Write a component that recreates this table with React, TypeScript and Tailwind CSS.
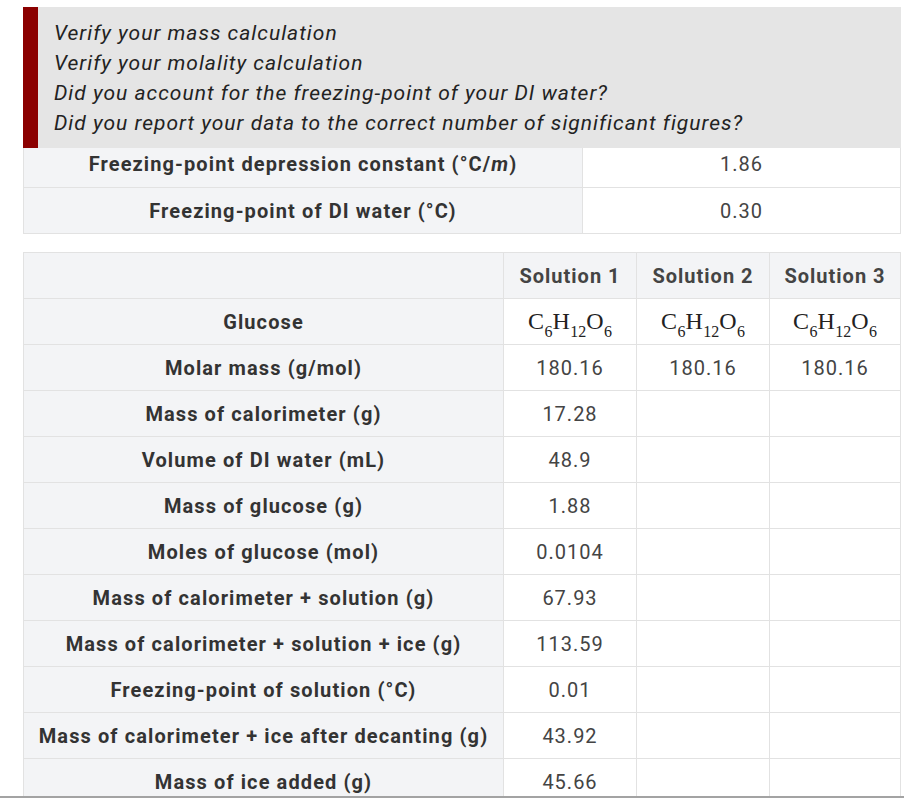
const rows: [string, string][] = [
  ["Molar mass (g/mol)", "180.16"],
  ["Mass of calorimeter (g)", "17.28"],
  ["Volume of DI water (mL)", "48.9"],
  ["Mass of glucose (g)", "1.88"],
  ["Moles of glucose (mol)", "0.0104"],
  ["Mass of calorimeter + solution (g)", "67.93"],
  ["Mass of calorimeter + solution + ice (g)", "113.59"],
  ["Freezing-point of solution (°C)", "0.01"],
  ["Mass of calorimeter + ice after decanting (g)", "43.92"],
  ["Mass of ice added (g)", "45.66"],
];

function Glucose() {
  return (
    <span className="font-['Liberation_Serif',serif] text-[24px] text-[#222] tracking-[0.5px]">
      C<sub className="text-[16px] align-[-4px] tracking-normal">6</sub>H
      <sub className="text-[16px] align-[-4px] tracking-normal">12</sub>O
      <sub className="text-[16px] align-[-4px] tracking-normal">6</sub>
    </span>
  );
}

export default function App() {
  const label =
    "bg-[#f3f4f6] text-center font-bold text-[#333] tracking-[1.1px] border-b border-[#e2e2e2]";
  const cell = "border-l border-b border-[#e2e2e2] text-center text-[#444] tracking-[1px]";

  return (
    <div className="h-[800px] bg-white font-['Roboto',sans-serif] text-[20px]">
      <div className="h-[798px] overflow-hidden border-b-2 border-[#a3a3a3] pt-[7px] px-[23px] pr-[3px]">
        {/* Hints */}
        <div className="flex bg-[#e5e5e5] h-[141px]">
          <div className="w-[15px] bg-[#8b0000]" />
          <div className="pl-[16px] pt-[11px] italic text-[21px] text-[#222] leading-[30px] tracking-[1px]">
            <p>Verify your mass calculation</p>
            <p>Verify your molality calculation</p>
            <p>Did you account for the freezing-point of your DI water?</p>
            <p>Did you report your data to the correct number of significant figures?</p>
          </div>
        </div>

        {/* Constants */}
        <div className="grid grid-cols-[558px_1fr] border-x border-[#e2e2e2]">
          <div className={`${label} h-[40px] leading-[32px]`}>
            Freezing-point depression constant (°C/<i>m</i>)
          </div>
          <div className={`${cell} h-[40px] leading-[32px]`}>1.86</div>
          <div className={`${label} h-[46px] leading-[46px]`}>Freezing-point of DI water (°C)</div>
          <div className={`${cell} h-[46px] leading-[46px]`}>0.30</div>
        </div>

        {/* Solutions */}
        <div className="mt-[18px] grid grid-cols-[479px_133px_133px_1fr] border border-b-0 border-[#e2e2e2]">
          <div className={`${label} h-[46px]`} />
          {["Solution 1", "Solution 2", "Solution 3"].map((s) => (
            <div key={s} className={`${cell} bg-[#f3f4f6] font-bold text-[#333] h-[46px] leading-[46px] tracking-[1.1px]`}>
              {s}
            </div>
          ))}
          <div className={`${label} h-[46px] leading-[46px]`}>Glucose</div>
          {[1, 2, 3].map((i) => (
            <div key={i} className={`${cell} h-[46px] leading-[44px]`}>
              <Glucose />
            </div>
          ))}
          {rows.map(([name, v], idx) => (
            <div key={name} className="contents">
              <div className={`${label} h-[46px] leading-[46px]`}>{name}</div>
              <div className={`${cell} h-[46px] leading-[46px]`}>{v}</div>
              <div className={`${cell} h-[46px] leading-[46px]`}>{idx === 0 ? v : ""}</div>
              <div className={`${cell} h-[46px] leading-[46px]`}>{idx === 0 ? v : ""}</div>
            </div>
          ))}
        </div>
      </div>
    </div>
  );
}
